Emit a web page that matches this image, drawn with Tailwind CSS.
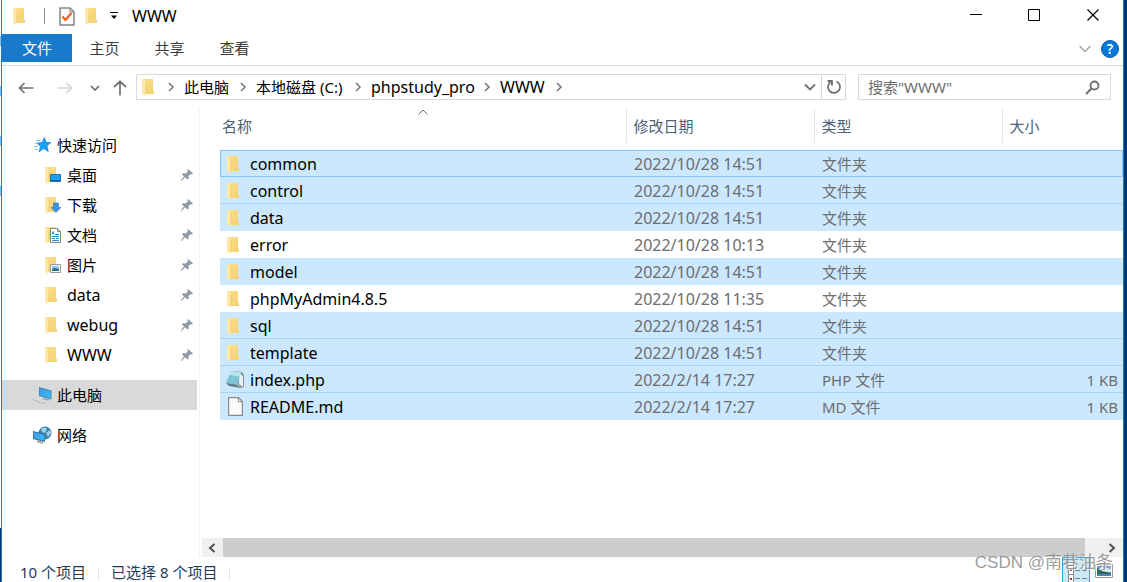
<!DOCTYPE html>
<html lang="zh-CN">
  <head>
    <meta charset="UTF-8" />
    <meta name="viewport" content="width=device-width, initial-scale=1.0" />
    <title>WWW</title>
    <script src="https://cdn.jsdelivr.net/npm/@tailwindcss/browser@4"></script>
  </head>

  <body
    class="flex h-screen overflow-hidden bg-white font-['Noto_Sans','Noto_Sans_CJK_SC',sans-serif] text-[15px] leading-6 text-black"
  >
    <!-- Shared icons -->
    <svg class="absolute size-0" xmlns="http://www.w3.org/2000/svg">
      <defs>
        <linearGradient id="fold" x1="0" x2="1" y1="0" y2="1">
          <stop offset="0" stop-color="#fbe08c" />
          <stop offset="1" stop-color="#f5d06e" />
        </linearGradient>
        <linearGradient id="blue" x1="0" x2="1" y1="0" y2="1">
          <stop offset="0" stop-color="#3a9ae4" />
          <stop offset="1" stop-color="#3dbaff" />
        </linearGradient>
      </defs>
      <symbol id="folder" viewBox="0 0 18 18">
        <path d="M1 1h11v11.500l1 .5v3H3z" fill="url(#fold)" />
        <path d="M1 1l4 2.500V14l-1 4-3-2.500z" fill="#ffe8a6" />
        <path d="M5 4v10l-.5 1.500" fill="none" stroke="#e6bd5c" stroke-width=".6" />
      </symbol>
      <symbol id="pin" viewBox="0 0 14 14">
        <path
          d="M8 1l5 4.500-1.500 1-1-.2L8.500 8l.3 2.500-1.300.9L5 9.200 1.500 13l-.7-.6L4 8.200 1.800 6.300 3 5.200l2.500.3L8 3.500l-.7-1.300z"
          fill="#8e9aa5"
        />
      </symbol>
      <symbol id="chev" viewBox="0 0 8 10">
        <path d="M2 1l4 4-4 4" fill="none" stroke="#767676" stroke-width="1.500" />
      </symbol>
    </svg>

    <!-- Window behind, left edge -->
    <div class="flex w-px shrink-0 flex-col">
      <div class="h-9"></div>
      <div class="h-[10px] bg-[#7fc0ee]"></div>
      <div class="h-10"></div>
      <div class="h-[10px] bg-[#7fc0ee]"></div>
      <div class="h-10"></div>
      <div class="h-[10px] bg-[#7fc0ee]"></div>
      <div class="h-10"></div>
      <div class="h-[10px] bg-[#7fc0ee]"></div>
      <div class="h-[332px]"></div>
      <div class="flex-1 bg-[#00356e]"></div>
    </div>

    <div class="flex h-full min-w-0 flex-1 flex-col border-x border-[#1979ca] bg-white">
      <!-- Title bar -->
      <header class="flex h-[34px] shrink-0 items-start justify-between">
        <div class="flex h-8 items-center pl-[10px]">
          <svg class="size-[18px]"><use href="#folder" /></svg>
          <span class="ml-[14px] h-4 w-px bg-[#8c8c8c]"></span>
          <button class="ml-[14px]" aria-label="属性">
            <svg class="h-[19px] w-4" viewBox="0 0 16 19">
              <path d="M1 1h10l4 4v13H1z" fill="#fafafa" stroke="#858585" stroke-width="1.500" />
              <path d="M11 1v4h4" fill="none" stroke="#858585" />
              <path d="M3.500 9.500l3 3.500 6-7" fill="none" stroke="#f0581a" stroke-width="2" />
            </svg>
          </button>
          <button class="ml-[9px]" aria-label="新建文件夹">
            <svg class="size-[18px]"><use href="#folder" /></svg>
          </button>
          <button class="ml-2" aria-label="自定义快速访问工具栏">
            <svg class="h-2 w-2" viewBox="0 0 8 8">
              <path d="M0 .5h8" stroke="#000" />
              <path d="M1 3.500h6L4 7z" />
            </svg>
          </button>
          <h1 class="ml-[14px] text-base leading-[30px]">WWW</h1>
        </div>
        <div class="flex h-[30px] items-center pr-px">
          <button class="flex w-[58px] justify-center" aria-label="最小化">
            <svg class="size-3" viewBox="0 0 12 12"><path d="M0 5.500h12" stroke="#000" /></svg>
          </button>
          <button class="flex w-[58px] justify-center" aria-label="最大化">
            <svg class="size-3" viewBox="0 0 12 12">
              <path d="M.5.5h11v11H.5z" fill="none" stroke="#000" />
            </svg>
          </button>
          <button class="flex w-[59px] justify-center" aria-label="关闭">
            <svg class="size-3" viewBox="0 0 12 12">
              <path d="M.5.5l11 11M11.500.5l-11 11" stroke="#000" stroke-width="1.200" />
            </svg>
          </button>
        </div>
      </header>

      <!-- Ribbon tabs -->
      <nav
        class="flex h-8 shrink-0 items-start justify-between border-b border-[#dadbdc] text-[#3c3c3c]"
      >
        <div class="flex h-7 items-center">
          <button class="h-7 w-[70px] bg-[#1979ca] text-white">文件</button>
          <button class="w-[65px]">主页</button>
          <button class="w-[65px]">共享</button>
          <button class="w-[65px]">查看</button>
        </div>
        <div class="flex h-[30px] items-center gap-[10px] pr-1">
          <button aria-label="展开功能区">
            <svg class="h-2 w-3" viewBox="0 0 12 8">
              <path d="M.5 1L6 6.500 11.500 1" fill="none" stroke="#a0a0a0" stroke-width="1.300" />
            </svg>
          </button>
          <button
            class="size-[18px] rounded-full border border-[#0b5cad] bg-[#0078d7] text-sm leading-4 font-semibold text-white"
            aria-label="帮助"
          >
            ?
          </button>
        </div>
      </nav>

      <!-- Address bar -->
      <div class="flex h-[43px] shrink-0 items-start pt-2 pr-3">
        <div class="flex h-7 w-[134px] shrink-0 items-center pl-4">
          <button aria-label="后退">
            <svg class="h-3 w-4" viewBox="0 0 16 12">
              <path d="M6.500 1l-5 5 5 5M2 6h13.500" fill="none" stroke="#707070" stroke-width="1.700" />
            </svg>
          </button>
          <button class="ml-[23px]" aria-label="前进">
            <svg class="h-3 w-4" viewBox="0 0 16 12">
              <path d="M9.500 1l5 5-5 5M14 6H.5" fill="none" stroke="#d6d6d6" stroke-width="1.700" />
            </svg>
          </button>
          <button class="ml-[17px]" aria-label="最近浏览的位置">
            <svg class="h-[6px] w-[10px]" viewBox="0 0 10 6">
              <path d="M1 1l4 4 4-4" fill="none" stroke="#707070" stroke-width="1.700" />
            </svg>
          </button>
          <button class="ml-[13px]" aria-label="上移">
            <svg class="h-4 w-[14px]" viewBox="0 0 14 16">
              <path d="M1 7l6-5.500L13 7M7 2v13.500" fill="none" stroke="#707070" stroke-width="1.700" />
            </svg>
          </button>
        </div>
        <div class="flex h-[26px] flex-1 items-center border border-[#d9d9d9]">
          <svg class="ml-[4px] size-[18px]"><use href="#folder" /></svg>
          <ol class="flex flex-1 items-center pl-2">
            <li class="flex w-[72px] items-center gap-[9px] whitespace-nowrap">
              <svg class="h-[10px] w-2"><use href="#chev" /></svg>
              <a href="#">此电脑</a>
            </li>
            <li class="flex w-[115px] items-center gap-[9px] whitespace-nowrap">
              <svg class="h-[10px] w-2"><use href="#chev" /></svg>
              <a href="#">本地磁盘 (C:)</a>
            </li>
            <li class="flex w-[129px] items-center gap-[9px] whitespace-nowrap">
              <svg class="h-[10px] w-2"><use href="#chev" /></svg>
              <a href="#" class="text-base">phpstudy_pro</a>
            </li>
            <li class="flex w-[72px] items-center gap-[9px] whitespace-nowrap">
              <svg class="h-[10px] w-2"><use href="#chev" /></svg>
              <a href="#" class="text-base">WWW</a>
            </li>
            <li><svg class="h-[10px] w-2"><use href="#chev" /></svg></li>
          </ol>
          <button class="pr-[5px]" aria-label="上一个位置">
            <svg class="h-2 w-3" viewBox="0 0 12 8">
              <path d="M1 1.500l5 5 5-5" fill="none" stroke="#707070" stroke-width="1.900" />
            </svg>
          </button>
          <button
            class="flex h-6 w-6 items-center justify-center border-l border-[#d9d9d9]"
            aria-label="刷新"
          >
            <svg class="size-4" viewBox="0 0 16 16">
              <path d="M10.500 2.500a6 6 0 1 1-6 .6" fill="none" stroke="#707070" stroke-width="1.800" />
              <path d="M1.500 2h4.500v4.500" fill="none" stroke="#707070" stroke-width="1.800" />
            </svg>
          </button>
        </div>
        <label
          class="ml-3 flex h-[26px] w-[253px] items-center border border-[#d9d9d9] pr-[10px] pl-[9px]"
        >
          <input
            type="text"
            aria-label="搜索"
            placeholder='搜索"WWW"'
            class="min-w-0 flex-1 outline-none placeholder:text-[#6d6d6d]"
          />
          <svg class="size-[15px]" viewBox="0 0 15 15">
            <circle cx="9.500" cy="5.500" r="4" fill="none" stroke="#707070" stroke-width="1.800" />
            <path d="M6.500 8.500L1 14" stroke="#707070" stroke-width="2.200" />
          </svg>
        </label>
      </div>

      <div class="flex min-h-0 flex-1">
        <!-- Navigation pane -->
        <aside class="w-[198px] shrink-0 border-r border-[#f2f2f2] pt-[21px]">
          <ul class="mr-[2px]">
            <li class="flex h-[30px] items-center pl-8">
              <svg class="h-4 w-[17px]" viewBox="0 0 17 16">
                <path
                  d="M10.500.5l1.500 4.800 5 .3-4 3.200 1.300 5.700-4.800-3-4.500 3.500 1.500-5.500L3 6l5-.4z"
                  fill="#1ba1f2"
                  stroke="#1583c9"
                  stroke-width=".7"
                />
                <path d="M2 3.500h5M1 6.500h3M0 9.500h4M1 12.500h3" stroke="#7cc4f0" />
              </svg>
              <span class="ml-[6px]">快速访问</span>
            </li>
            <li class="flex h-[30px] items-center pr-[3px] pl-[42px]">
              <svg class="h-[18px] w-[18px]" viewBox="0 0 18 18">
                <use href="#folder" />
                <path d="M6.500 8.500h10v7h-10z" fill="#1ba1f2" stroke="#1673b8" />
                <path d="M7 14.500h9" stroke="#0f5d9b" />
              </svg>
              <span class="ml-[5px] flex-1">桌面</span>
              <svg class="size-[14px]"><use href="#pin" /></svg>
            </li>
            <li class="flex h-[30px] items-center pr-[3px] pl-[42px]">
              <svg class="h-[18px] w-[18px]" viewBox="0 0 18 18">
                <use href="#folder" />
                <path d="M9.500 7h5v4.500h2.500L12 16.500l-5-5h2.500z" fill="#3a93e0" stroke="#2879c4" stroke-width=".6" />
              </svg>
              <span class="ml-[5px] flex-1">下载</span>
              <svg class="size-[14px]"><use href="#pin" /></svg>
            </li>
            <li class="flex h-[30px] items-center pr-[3px] pl-[42px]">
              <svg class="h-[18px] w-[18px]" viewBox="0 0 18 18">
                <use href="#folder" />
                <path d="M6.500 2.500h7l3 3v11h-10z" fill="#fff" stroke="#858585" />
                <path d="M13.500 2.500v3h3" fill="none" stroke="#858585" />
                <path d="M8 8.500l1-3 1 3M11 8.500h4M8 10.500h7M8 12.500h3M12 12.500h3M8 14.500h7" fill="none" stroke="#2b8ac9" />
              </svg>
              <span class="ml-[5px] flex-1">文档</span>
              <svg class="size-[14px]"><use href="#pin" /></svg>
            </li>
            <li class="flex h-[30px] items-center pr-[3px] pl-[42px]">
              <svg class="h-[18px] w-[18px]" viewBox="0 0 18 18">
                <use href="#folder" />
                <path d="M6.500 8.500h10v8h-10z" fill="#fff" stroke="#9a9a9a" />
                <path d="M8 10h7v5H8z" fill="#8cc8f2" />
                <path d="M8 13l3-1 4 1v2H8z" fill="#2a6f83" />
              </svg>
              <span class="ml-[5px] flex-1">图片</span>
              <svg class="size-[14px]"><use href="#pin" /></svg>
            </li>
            <li class="flex h-[30px] items-center pr-[3px] pl-[42px]">
              <svg class="size-[18px]"><use href="#folder" /></svg>
              <span class="ml-[5px] flex-1 text-base">data</span>
              <svg class="size-[14px]"><use href="#pin" /></svg>
            </li>
            <li class="flex h-[30px] items-center pr-[3px] pl-[42px]">
              <svg class="size-[18px]"><use href="#folder" /></svg>
              <span class="ml-[5px] flex-1 text-base">webug</span>
              <svg class="size-[14px]"><use href="#pin" /></svg>
            </li>
            <li class="flex h-[30px] items-center pr-[3px] pl-[42px]">
              <svg class="size-[18px]"><use href="#folder" /></svg>
              <span class="ml-[5px] flex-1 text-base">WWW</span>
              <svg class="size-[14px]"><use href="#pin" /></svg>
            </li>
            <li class="mt-[10px] flex h-[30px] items-center bg-[#d9d9d9] pl-[30px]">
              <svg class="h-[18px] w-5" viewBox="0 0 20 18">
                <path d="M7 1l12.500 3.500v9L7 10z" fill="#4a87a8" />
                <path d="M8 2.300l10.500 3v7L8 9.200z" fill="url(#blue)" />
                <path d="M11 12.500l6 1.500" stroke="#8fa3ae" stroke-width="1.500" />
                <path d="M.5 13.500l10 4 4-2" fill="none" stroke="#a9b4bb" stroke-width="1.200" stroke-dasharray="2 1" />
              </svg>
              <span class="ml-[5px]">此电脑</span>
            </li>
            <li class="mt-[10px] flex h-[30px] items-center pl-[30px]">
              <svg class="h-[18px] w-5" viewBox="0 0 20 18">
                <circle cx="13" cy="7" r="6.500" fill="#3b82ab" />
                <path d="M9 3q4-3 6 0l-2 4-3-1zM14 7l4-3 1 3-3 4z" fill="#9fd0e4" />
                <path d="M1 5l12 3v8L1 13z" fill="#31708f" />
                <path d="M1.800 6l10.400 2.700v6L1.800 12.200z" fill="url(#blue)" />
                <path d="M5 15l6 2" stroke="#9aa8b0" stroke-width="2" />
              </svg>
              <span class="ml-[5px]">网络</span>
            </li>
          </ul>
        </aside>

        <!-- File list -->
        <main class="flex min-w-0 flex-1 flex-col pl-[2px]">
          <div class="min-h-0 flex-1 overflow-hidden pl-[18px]">
            <table class="w-full table-fixed border-collapse text-left whitespace-nowrap">
              <colgroup>
                <col />
                <col class="w-[188px]" />
                <col class="w-[188px]" />
                <col class="w-[121px]" />
              </colgroup>
              <thead>
                <tr class="h-[34px] text-[#4c607a]">
                  <th class="relative pl-[2px] font-normal">
                    名称
                    <svg class="absolute top-0 left-1/2 h-[6px] w-[10px] -translate-x-1/2" viewBox="0 0 10 6">
                      <path d="M.5 5.500L5 1l4.500 4.500" fill="none" stroke="#707070" />
                    </svg>
                  </th>
                  <th class="border-l border-[#e5e5e5] pl-[7px] font-normal">修改日期</th>
                  <th class="border-l border-[#e5e5e5] pl-[7px] font-normal">类型</th>
                  <th class="border-l border-[#e5e5e5] pl-[7px] font-normal">大小</th>
                </tr>
                <tr class="h-[7px]" aria-hidden="true"></tr>
              </thead>
              <tbody id="files"></tbody>
            </table>
          </div>

          <!-- Horizontal scrollbar -->
          <div class="flex h-[19px] shrink-0 bg-[#f0f0f0]">
            <button class="flex w-[21px] items-center justify-center pr-[2px]" aria-label="向左滚动">
              <svg class="h-[10px] w-2" viewBox="0 0 8 10">
                <path d="M6.500 1l-4.500 4 4.500 4" fill="none" stroke="#505050" stroke-width="2" />
              </svg>
            </button>
            <div class="flex-1 bg-[#cdcdcd]"></div>
            <div class="flex w-[38px] items-center justify-end pr-[7px]">
              <button aria-label="向右滚动">
                <svg class="h-[10px] w-2" viewBox="0 0 8 10">
                  <path d="M1.500 1L6 5 1.500 9" fill="none" stroke="#505050" stroke-width="2" />
                </svg>
              </button>
            </div>
          </div>
        </main>
      </div>

      <!-- Status bar -->
      <footer class="relative flex h-[25px] shrink-0 justify-between text-[#1e395b]">
        <div class="flex pt-[3px] pl-[18px]">
          <span>10 个项目</span>
          <span class="mx-3 mt-2 h-3 w-px bg-[#e5e5e5]"></span>
          <span>已选择 8 个项目</span>
          <span class="ml-3 mt-2 h-3 w-px bg-[#e5e5e5]"></span>
        </div>
        <div class="flex pr-[10px]">
          <button class="h-[30px] w-7 border border-[#26a0da] bg-[#cbe8f6]" aria-label="详细信息">
            <svg class="h-[24px] w-[26px]" viewBox="0 0 26 24">
              <path d="M5.500 5.500h5v17h-5zM5.500 14.500h5" fill="#fff" stroke="#8c8c8c" />
              <path d="M7 10h2M7 19h2" stroke="#a33b2a" stroke-width="2" />
              <path d="M12 10.500h5M19 10.500h5M12 18.500h5M19 18.500h5" stroke="#7a7a7a" />
            </svg>
          </button>
          <button class="ml-[5px] h-[22px]" aria-label="大缩略图">
            <svg class="h-[22px] w-[18px]" viewBox="0 0 18 22">
              <path d="M.5 7.500h17v13H.5z" fill="#fff" stroke="#9a9a9a" />
              <path d="M2 9h14v10H2z" fill="#6fa8e8" />
              <path d="M5 11q4-2 11 1v3H8z" fill="#dcecfa" />
              <path d="M2 11l5 3 9 2v1H2z" fill="#2f6b5c" />
              <path d="M2 17h14v2H2z" fill="#4f86b8" />
            </svg>
          </button>
        </div>
        <p
          class="absolute -top-[6px] right-[10px] font-['Liberation_Sans','Noto_Sans_CJK_SC',sans-serif] text-[17px] text-[#8f8f8f]/90 [text-shadow:1px_1px_0_#ffffffb0]"
        >
          CSDN @南巷油条
        </p>
      </footer>
    </div>

    <!-- Desktop, right edge -->
    <div class="w-[3px] shrink-0 bg-[#00356e]"></div>

    <script>
      const icons = {
        folder: `<svg class="size-[18px]"><use href="#folder" /></svg>`,
        php: `<svg class="h-[19px] w-5" viewBox="0 0 20 19">
          <path d="M6 1l11 1 2 3v12l-3 1-3-4z" fill="#7f9199" />
          <path d="M14 3l4 3v11l-4-3z" fill="#e9eff2" />
          <path d="M6 1l10 1.500-4 12L1 13z" fill="#7cc5d6" />
          <path d="M6 1l10 1.500-1.500 4L4.500 5z" fill="#bfe3ea" />
          <path d="M1 13l11 1.500 4 3.500-12-2z" fill="#5e7b86" />
        </svg>`,
        file: `<svg class="h-[19px] w-[15px]" viewBox="0 0 15 19">
          <path d="M.6.6h10l3.800 4v13.800H.6z" fill="#fbfbfb" stroke="#8a8a8a" stroke-width="1.200" />
          <path d="M10.500.5v4.200h4" fill="none" stroke="#8a8a8a" />
        </svg>`,
      };

      const files = [
        { name: "common", date: "2022/10/28 14:51", type: "文件夹", icon: "folder", selected: true, focused: true },
        { name: "control", date: "2022/10/28 14:51", type: "文件夹", icon: "folder", selected: true },
        { name: "data", date: "2022/10/28 14:51", type: "文件夹", icon: "folder", selected: true },
        { name: "error", date: "2022/10/28 10:13", type: "文件夹", icon: "folder" },
        { name: "model", date: "2022/10/28 14:51", type: "文件夹", icon: "folder", selected: true },
        { name: "phpMyAdmin4.8.5", date: "2022/10/28 11:35", type: "文件夹", icon: "folder" },
        { name: "sql", date: "2022/10/28 14:51", type: "文件夹", icon: "folder", selected: true },
        { name: "template", date: "2022/10/28 14:51", type: "文件夹", icon: "folder", selected: true },
        { name: "index.php", date: "2022/2/14 17:27", type: "PHP 文件", size: "1 KB", icon: "php", selected: true },
        { name: "README.md", date: "2022/2/14 17:27", type: "MD 文件", size: "1 KB", icon: "file", selected: true },
      ];

      const rowClass = (file, next) => {
        if (file.focused) return "h-[27px] bg-[#cce8ff] outline outline-[#84c6fb] -outline-offset-1";
        if (!file.selected) return "h-[27px]";
        // a line only between two selected rows
        return next && next.selected
          ? "h-[27px] bg-[#cce8ff] shadow-[inset_0_-1px_0_#a5d5fb]"
          : "h-[27px] bg-[#cce8ff]";
      };

      document.getElementById("files").innerHTML = files
        .map(
          (file, i) => `
          <tr class="${rowClass(file, files[i + 1])}">
            <td class="p-0">
              <div class="flex items-center">
                <span class="flex w-[30px] justify-center">${icons[file.icon]}</span>
                <span class="text-base leading-6">${file.name}</span>
              </div>
            </td>
            <td class="py-0 pl-2 text-base leading-6 text-[#6d6d6d]">${file.date}</td>
            <td class="py-0 pl-2 text-[#6d6d6d]">${file.type}</td>
            <td class="py-0 pr-[5px] text-right text-[#6d6d6d]">${file.size || ""}</td>
          </tr>`
        )
        .join("");
    </script>
  </body>
</html>
